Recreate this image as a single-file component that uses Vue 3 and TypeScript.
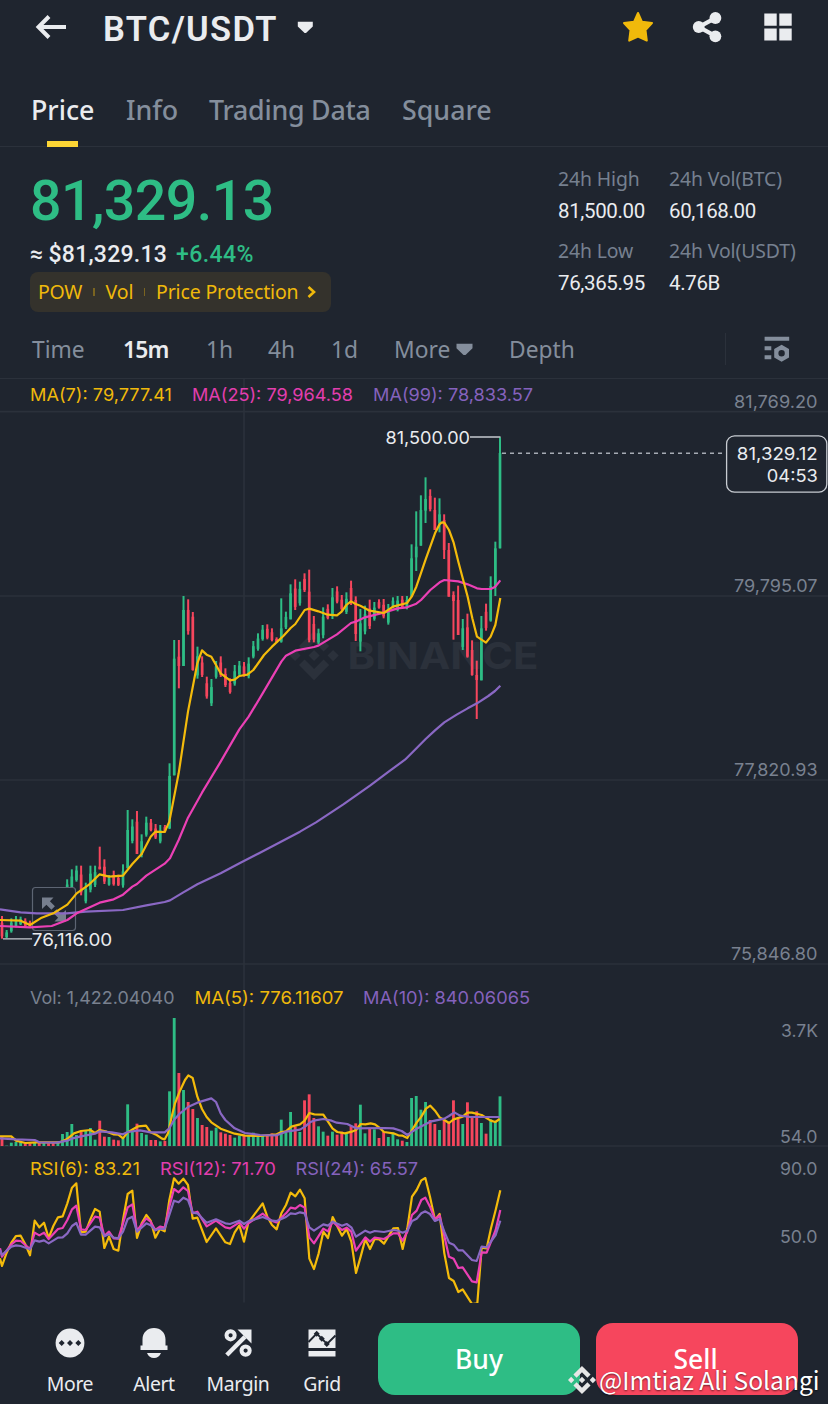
<script setup lang="ts">
interface Candle {
  x: number
  up: boolean
  high: number
  low: number
  volTop: number
  bodyTop: number
  bodyBottom: number
}

interface Label {
  text: string
  x: number
  y: number
  w: number
  tone: string
}

const tabs = ['Price', 'Info', 'Trading Data', 'Square']
const intervals = ['Time', '15m', '1h', '4h', '1d', 'More', 'Depth']

const stats = [
  ['24h High', '24h Vol(BTC)'],
  ['81,500.00', '60,168.00'],
  ['24h Low', '24h Vol(USDT)'],
  ['76,365.95', '4.76B'],
]

// direction, high, low, volume top and, for some, body top and bottom:
// all in thirds of a pixel within their panel
const raw = `r 1488 1556 470,g 1530 1554 497,g 1495 1538 488,g 1488 1522 486,g 1490 1515 486,r 1495 1520 490,r 1502 1520 490,
g 1495 1515 488,r 1490 1510 488,g 1480 1500 488,r 1480 1495 490,r 1475 1495 488,g 1450 1490 485,g 1420 1470 462,
g 1378 1430 456,g 1348 1420 432,g 1337 1385 465,r 1337 1426 455,g 1388 1450 453,g 1337 1417 444,g 1337 1401 479,
r 1280 1348 422 1340 1348,r 1318 1392 470,g 1365 1397 471,r 1352 1397 479,r 1364 1398 481,g 1333 1403 475,g 1170 1345 373 1230 1345,
g 1198 1270 452,r 1173 1302 431 1205 1302,g 1243 1312 459,g 1190 1250 464,r 1197 1234 480,r 1212 1257 480,g 1215 1270 484,
r 1215 1237 483,g 1030 1227 334 1068 1225,g 660 1066 114 716 1066,r 660 805 279 710 738,g 528 738 330 570 738,r 538 644 366,r 576 752 387 590 750,g 680 776 414,
r 709 771 435,r 770 836 441,g 777 858 452,g 723 776 443,r 709 771 457,r 745 801 461,r 775 821 465,g 735 797 473,
g 723 768 467,r 726 770 467,g 712 775 468,g 663 715 458,g 640 692 468,g 615 662 468,r 613 658 465,r 625 664 460,
r 652 668 466,g 535 668 419 625 665,g 575 627 457,g 493 598 396 520 598,r 478 570 440,g 485 557 456,r 460 516 361,r 449 667 343 515 660,
r 588 667 414,g 626 672 439,g 562 655 455,r 553 598 467,g 504 597 455,r 499 550 464,r 525 572 455,g 517 582 460,
r 482 555 438,r 529 663 430 540 642,g 567 694 374 610 665,g 557 643 460,r 539 627 445,g 546 602 448,r 538 566 474,r 537 595 456,
g 552 614 471,g 532 565 458,g 528 574 478,r 528 565 482,g 528 568 486,g 373 530 354 415 530,g 274 453 348 380 412,g 226 377 389 270 377,
g 172 309 366 237 272,r 208 274 420,r 233 330 432 270 330,g 235 337 450 283 310,r 283 417 420 300 390,r 369 530 425 390 530,r 514 659 361 525 543,r 497 645 417 540 645,
g 597 690 432,r 581 713 367 622 710,r 661 767 412 690 765,r 722 897 394 765 780,g 588 781 429 625 781,r 551 632 461,g 469 605 418 498 602,g 365 528 425 385 500,g 52 385 349 99 385`

const candles: Candle[] = raw.split(',\n').join(',').split(',').map((row, i) => {
  const [dir, high, low, vol, top, bottom] = row.trim().split(' ')
  const h = Number(high)
  const l = Number(low)
  return {
    x: 6 + i * 13.963,
    up: dir === 'g',
    high: h,
    low: l,
    volTop: Number(vol),
    bodyTop: top ? Number(top) : h + (l - h) * 0.3,
    bodyBottom: bottom ? Number(bottom) : h + (l - h) * 0.9,
  }
})

// Joins the first page of a series with the page that begins 260px further right
function series(first: string, second = ''): string {
  const shifted = second
    .split(' ')
    .filter(Boolean)
    .map((p) => {
      const [x, y] = p.split(',').map(Number)
      return `${x + 780},${y}`
    })
  return [first, ...shifted].join(' ')
}

const priceLines = [
  { tone: 'purple', points: '0,1468 62,1477 110,1480 200,1480 257,1475 369,1470 439,1456 494,1446 510,1441 550,1417 592,1393 662,1360 720,1329 780,1298 840,1267 900,1235 948,1207 1030,1153 1110,1097 1170,1052 1215,1019 1245,989 1277,957 1305,931 1333,907 1370,884 1403,865 1431,850 1465,828 1485,813 1501,797' },
  { tone: 'pink', points: '0,1518 90,1522 155,1518 202,1500 230,1480 299,1448 341,1438 369,1424 397,1400 411,1392 439,1367 494,1331 510,1315 536,1260 564,1193 606,1118 662,1025 718,928 746,890 788,820 844,725 858,707 886,692 942,681 955,677 1011,643 1053,609 1067,605 1095,592 1151,578 1193,565 1221,562 1249,551 1263,540 1291,510 1319,487 1333,480 1375,484 1403,493 1431,505 1445,507 1472,507 1486,500 1501,481' },
  { tone: 'yellow', points: '0,1500 62,1502 90,1515 125,1493 160,1480 202,1454 230,1420 268,1393 299,1363 327,1370 369,1367 397,1332 425,1302 452,1250 466,1235 494,1236 508,1205 536,1060 564,875 592,730 606,691 620,704 634,710 662,760 690,781 704,779 718,768 742,764 760,750 792,705 816,680 850,648 872,624 886,612 914,570 928,566 955,574 983,584 1011,586 1025,575 1039,555 1053,544 1067,552 1081,557 1109,572 1151,579 1179,560 1221,549 1235,530 1249,500 1277,418 1305,340 1319,312 1326,307 1333,308 1347,330 1361,368 1375,425 1403,530 1417,595 1431,650 1458,668 1472,650 1486,615 1501,534' },
]

const volumeLines = [
  { tone: 'yellow', points: series('0,469 34,469 48,482 76,489 110,487 180,487 200,478 222,460 243,453 271,450 285,459 299,450 320,455 340,463 355,464 369,475 383,457 400,447 415,439 438,437 452,457 470,465 486,476 494,478 504,460 515,410 525,370 540,332 555,300 565,286 578,294 592,350 606,387 620,411 634,427 662,446 704,461 735,467 780,468', '50,463 64,456 78,454 94,440 120,433 134,422 148,399 163,403 190,404 204,425 218,446 232,456 255,460 275,455 288,450 302,432 316,433 332,430 345,433 358,443 372,456 400,460 415,466 428,467 442,474 456,450 470,428 484,410 498,386 511,377 525,392 539,412 553,420 567,429 581,418 608,410 622,398 636,398 665,405 692,422 706,426 719,417') },
  { tone: 'purple', points: series('0,475 48,478 104,480 118,487 170,488 202,482 215,476 243,469 285,461 300,454 335,457 369,463 383,456 420,451 452,457 494,457 508,445 522,420 540,400 564,381 592,368 634,355 648,366 662,400 676,420 704,445 735,459 780,465', '50,466 78,455 120,449 135,440 150,427 165,421 190,417 215,422 230,428 262,432 288,445 375,444 400,445 425,453 442,465 470,446 511,425 553,416 567,408 583,397 600,407 630,411 719,411') },
]

const rsiLines = [
  { tone: 'yellow', points: series('0,325 6,348 20,308 34,278 48,258 62,257 76,283 90,316 104,212 118,232 132,218 146,264 160,228 174,202 188,199 202,160 216,113 229,100 243,247 257,245 271,208 285,177 299,185 313,294 327,260 341,297 355,302 369,210 383,132 397,122 411,264 425,220 439,195 452,212 466,263 480,237 494,244 508,150 522,85 536,101 550,86 564,105 578,206 592,203 620,276 648,235 676,277 690,282 704,247 718,226 732,275 745,218', '8,160 22,200 36,225 50,238 64,190 78,165 92,128 106,139 120,119 134,145 148,326 162,357 176,310 190,245 204,264 218,201 246,257 260,237 274,275 288,369 302,320 316,268 330,297 344,267 358,268 372,281 400,235 414,234 428,297 442,235 456,140 470,120 484,91 496,84 510,140 525,210 539,192 553,310 567,384 581,393 595,426 608,418 636,462 652,460 665,293 680,295 693,235 707,180 721,121') },
  { tone: 'pink', points: series('0,295 6,320 34,283 48,272 62,273 90,297 104,248 118,256 132,248 146,267 174,237 188,234 202,210 216,178 229,167 243,238 257,240 285,200 299,203 313,258 327,245 341,265 355,266 369,220 383,172 397,163 411,242 439,205 452,215 466,240 480,230 494,233 508,170 522,117 536,127 550,112 564,123 578,190 592,185 620,229 648,212 676,232 690,235 718,217 732,236 745,220', '8,191 36,213 50,217 78,190 92,173 106,176 120,165 134,173 148,262 162,280 190,236 204,244 218,215 246,240 260,233 274,245 288,302 316,262 330,275 344,263 372,267 400,250 414,250 428,272 442,245 456,195 470,182 484,150 496,143 510,170 525,208 539,196 553,258 567,320 581,326 595,354 608,352 636,394 650,397 658,350 665,307 680,308 707,240 721,180') },
  { tone: 'purple', points: series('0,300 6,315 34,290 48,286 62,288 90,298 104,271 118,275 132,271 146,280 174,263 188,262 202,250 216,228 229,219 243,254 257,254 285,230 299,232 313,259 327,252 341,263 355,265 369,245 383,207 397,200 411,245 439,220 452,226 466,241 480,236 494,237 508,195 522,152 536,157 550,143 564,150 578,188 592,190 620,218 648,208 676,220 690,222 718,212 732,222 745,214', '8,201 36,212 50,213 78,201 92,190 106,192 120,187 134,190 148,232 162,242 190,223 204,227 218,215 246,227 260,222 274,232 288,260 316,242 330,248 344,243 372,246 400,240 414,242 428,248 442,242 456,213 470,206 484,190 496,184 510,192 525,213 539,207 553,245 567,278 581,284 595,301 608,301 636,330 650,333 665,290 680,292 707,255 721,212') },
]

const labels: Label[] = [
  { text: 'MA(7): 79,777.41', x: 30, y: 401.2, w: 142, tone: 'yellow' },
  { text: 'MA(25): 79,964.58', x: 192, y: 401.2, w: 161, tone: 'pink' },
  { text: 'MA(99): 78,833.57', x: 373, y: 401.2, w: 160, tone: 'purple' },
  { text: '81,769.20', x: 734, y: 408.4, w: 83.5, tone: 'gray' },
  { text: '79,795.07', x: 734, y: 592.2, w: 83.5, tone: 'gray' },
  { text: '77,820.93', x: 734, y: 776.2, w: 83.5, tone: 'gray' },
  { text: '75,846.80', x: 731, y: 960.2, w: 86.5, tone: 'gray' },
  { text: 'Vol: 1,422.04040', x: 30, y: 1004.4, w: 144.5, tone: 'gray' },
  { text: 'MA(5): 776.11607', x: 194.5, y: 1004.4, w: 149, tone: 'yellow' },
  { text: 'MA(10): 840.06065', x: 363, y: 1004.4, w: 167, tone: 'purple' },
  { text: '3.7K', x: 781, y: 1036.5, w: 37, tone: 'gray' },
  { text: '54.0', x: 780, y: 1142.5, w: 37.5, tone: 'gray' },
  { text: 'RSI(6): 83.21', x: 30, y: 1174.5, w: 110, tone: 'yellow' },
  { text: 'RSI(12): 71.70', x: 160, y: 1174.5, w: 116, tone: 'pink' },
  { text: 'RSI(24): 65.57', x: 295.5, y: 1174.5, w: 122.5, tone: 'purple' },
  { text: '90.0', x: 780, y: 1175, w: 37.5, tone: 'gray' },
  { text: '50.0', x: 780, y: 1243.2, w: 37.5, tone: 'gray' },
]

const binance =
  'M16.624 13.9202l2.7175 2.7154-7.353 7.353-7.353-7.352 2.7175-2.7164 4.6355 4.6595 4.6356-4.6595zm4.6366-4.6366L24 12l-2.7154 2.7164L18.5682 12l2.6924-2.7164zm-9.272.001l2.7163 2.6914-2.7164 2.7174v-.001L9.2721 12l2.7164-2.7154zm-9.2722-.001L5.4088 12l-2.6914 2.6924L0 12l2.7164-2.7164zM11.9885.0115l7.353 7.329-2.7174 2.7154-4.6356-4.6356-4.6355 4.6595-2.7174-2.7154 7.353-7.353z'
</script>

<template>
  <main class="screen">
    <header class="topbar">
      <svg class="back" width="32" height="26" viewBox="0 0 32 26">
        <path d="M14 2.500 3.500 13 14 23.500M4 13h27" fill="none" stroke="#eaecef" stroke-width="4" />
      </svg>
      <h1>BTC/USDT</h1>
      <svg class="caret" width="17" height="13" viewBox="0 0 17 13">
        <path d="M.8.700h15v4.800L9 12H7.600L.8 5.500z" fill="#eaecef" />
      </svg>
      <span class="spacer"></span>
      <svg class="star" width="32" height="32" viewBox="0 0 32 32">
        <path d="M16 2 20 10.800 30 12 23.500 19 24.800 29.600 16 25.500 7.200 29.600 8.500 19 2 12 12 10.800z" fill="#f0b90b" stroke="#f0b90b" stroke-width="2" stroke-linejoin="round" />
      </svg>
      <svg class="share" width="30" height="32" viewBox="0 0 30 32">
        <path d="M24 6.700 7 16l17 9.300" fill="none" stroke="#eaecef" stroke-width="4.200" />
        <circle cx="23.400" cy="7" r="5.900" fill="#eaecef" />
        <circle cx="6.700" cy="16" r="5.900" fill="#eaecef" />
        <circle cx="23.400" cy="25.300" r="5.900" fill="#eaecef" />
      </svg>
      <svg class="tiles" width="28" height="28" viewBox="0 0 28 28">
        <path d="M.3.600h12.400v12.200H.3zM15.300.600h12.400v12.200H15.300zM.3 15.600h12.400v12H.3zM15.300 15.600h12.400v12H15.300z" fill="#eaecef" />
      </svg>
    </header>

    <nav class="tabs">
      <span v-for="(tab, i) in tabs" :key="tab" :class="['tab', `tab-${i}`, { active: i === 0 }]">{{ tab }}</span>
    </nav>

    <section class="summary">
      <div class="quote">
        <div class="last">81,329.13</div>
        <div class="fiat"><span class="approx">≈</span> <span class="usd">$81,329.13</span> <span class="change">+6.44%</span></div>
        <div class="tags">
          <span class="tag-pow">POW</span><i></i><span class="tag-vol">Vol</span><i></i><span class="tag-pp">Price Protection</span>
          <svg width="10" height="14" viewBox="0 0 10 14"><path d="M1.500 2 7 7l-5.500 5" fill="none" stroke="#f0b90b" stroke-width="2.600" /></svg>
        </div>
      </div>
      <div class="stats">
        <template v-for="(row, r) in stats" :key="r">
          <span v-for="cell in row" :key="cell" :class="r % 2 ? 'value' : 'name'">{{ cell }}</span>
        </template>
      </div>
    </section>

    <nav class="intervals">
      <span v-for="item in intervals" :key="item" :class="{ active: item === '15m', more: item === 'More' }">{{ item }}<svg v-if="item === 'More'" width="17" height="13" viewBox="0 0 17 13"><path d="M.5.700h16v4.600L9.500 12h-2L.5 5.300z" fill="#848e9c" /></svg></span>
      <div class="settings">
        <svg width="26" height="26" viewBox="0 0 26 26">
          <path d="M.6.800h24.600v4H.6zM.6 10.300h6.700v4H.6zM.6 19.300h6.700v4H.6z" fill="#848e9c" />
          <path fill-rule="evenodd" d="M17.600 8.800 25 13v8.500l-7.400 4.300-7.400-4.300V13zM17.600 14a3.200 3.200 0 1 0 0 6.400 3.200 3.200 0 0 0 0-6.400z" fill="#848e9c" />
        </svg>
      </div>
    </nav>

    <svg class="chart" width="828" height="925" viewBox="0 379 828 925">
      <defs>
        <clipPath id="rsi-area"><rect x="0" y="80" width="2484" height="379" /></clipPath>
      </defs>
      <path class="grid" d="M0 411.700H828M0 596H828M0 780H828M0 964H828M0 1146H828M244 379V1302.500" />

      <g class="brand">
        <path :d="binance" transform="translate(289.500 631) scale(2.050)" />
        <text x="347.500" y="668.500" textLength="191" lengthAdjust="spacingAndGlyphs">BINANCE</text>
      </g>

      <g transform="translate(0 420) scale(.33333)">
        <g v-for="(c, i) in candles" :key="i" :class="c.up ? 'up' : 'down'">
          <rect :x="c.x - 3" :y="c.high" width="6" :height="c.low - c.high" />
          <rect :x="c.x - 4" :y="c.bodyTop" width="8" :height="c.bodyBottom - c.bodyTop" />
        </g>
      </g>

      <rect x="32.500" y="887.500" width="43" height="43" rx="3" class="expand" />
      <path d="M42 897.500h11.500l-3.600 3.700 5 5-3.500 3.500-5-5-4.400 4.400zM66 921.500H54.500l3.600-3.700-5-5 3.500-3.500 5 5 4.400-4.400z" fill="#777f8e" />

      <g transform="translate(0 420) scale(.33333)">
        <polyline v-for="l in priceLines" :key="l.tone" :class="['line', l.tone]" :points="l.points" />
      </g>

      <g transform="translate(0 980) scale(.33333)">
        <rect v-for="(c, i) in candles" :key="i" :class="c.up ? 'up' : 'down'" :x="c.x - 4.300" :y="c.volTop" width="8.600" :height="498 - c.volTop" />
        <polyline v-for="l in volumeLines" :key="l.tone" :class="['line', l.tone]" :points="l.points" />
      </g>

      <g transform="translate(0 1150) scale(.33333)" clip-path="url(#rsi-area)">
        <polyline v-for="l in rsiLines" :key="l.tone" :class="['line', l.tone]" :points="l.points" />
      </g>

      <text v-for="l in labels" :key="l.text" :x="l.x" :y="l.y" :textLength="l.w" lengthAdjust="spacingAndGlyphs" :class="['label', `fill-${l.tone}`]">{{ l.text }}</text>

      <path d="M470 437h30.500M3 938.800h29" stroke="#c5c9d0" stroke-width="1.300" />
      <path d="M502 453.200H722" stroke="#a6abb4" stroke-width="1.500" stroke-dasharray="4 4" />
      <text x="385.500" y="444.400" textLength="84.500" lengthAdjust="spacingAndGlyphs" class="label fill-white">81,500.00</text>
      <text x="31.800" y="945.800" textLength="80.500" lengthAdjust="spacingAndGlyphs" class="label fill-white">76,116.00</text>
      <rect x="726.600" y="435.800" width="100.200" height="56.400" rx="8" fill="#1f252f" stroke="#c8ccd2" stroke-width="1.300" />
      <text x="736.800" y="460.400" textLength="81" lengthAdjust="spacingAndGlyphs" class="label fill-white">81,329.12</text>
      <text x="766.800" y="482.400" textLength="51" lengthAdjust="spacingAndGlyphs" class="label fill-white">04:53</text>
    </svg>

    <footer class="actions">
      <div class="shortcut">
        <svg width="32" height="32" viewBox="0 0 32 32">
          <circle cx="16" cy="16" r="14.400" fill="#eaecef" />
          <path d="M7.700 13 10.700 16l-3 3-3-3zM16 13l3 3-3 3-3-3zM24.300 13l3 3-3 3-3-3z" fill="#1f252f" />
        </svg>
        <span>More</span>
      </div>
      <div class="shortcut">
        <svg width="32" height="32" viewBox="0 0 32 32">
          <path d="M4.500 12.500C4.500 5.500 9.500 1 16 1s11.500 4.500 11.500 11.500V18.500h2V23h-27v-4.500h2zM9 26h14c-1.300 3.200-3.800 5-7 5s-5.700-1.800-7-5z" fill="#eaecef" />
        </svg>
        <span>Alert</span>
      </div>
      <div class="shortcut">
        <svg width="32" height="32" viewBox="0 0 32 32">
          <path d="M4.800 28 23 9.800" stroke="#eaecef" stroke-width="4.400" />
          <path d="M15.500 2.500h14v14z" fill="#eaecef" />
          <circle cx="8.600" cy="8.300" r="4.100" fill="none" stroke="#eaecef" stroke-width="4" />
          <circle cx="23.600" cy="23.600" r="4.100" fill="none" stroke="#eaecef" stroke-width="4" />
        </svg>
        <span>Margin</span>
      </div>
      <div class="shortcut">
        <svg width="32" height="32" viewBox="0 0 32 32">
          <path d="M2.500 2.500h27v18.500h-27zM2.500 24h27v5.500h-27z" fill="#eaecef" />
          <path d="M2.500 15 10.700 6.700 21 17l8.500-8.500" fill="none" stroke="#1f252f" stroke-width="1.900" />
          <path d="M10.700 3.700l3 3-3 3-3-3zM15.800 8.800l3 3-3 3-3-3zM20.800 14l3 3-3 3-3-3z" fill="#1f252f" />
        </svg>
        <span>Grid</span>
      </div>
      <button class="buy">Buy</button>
      <button class="sell">Sell</button>
      <div class="author">
        <svg width="28" height="28" viewBox="0 0 24 24"><path :d="binance" fill="#e6e6e6" /></svg>
        <span>@Imtiaz Ali Solangi</span>
      </div>
    </footer>
  </main>
</template>

<style>
body {
  background: #1f252f;
}
</style>

<style scoped>
.screen {
  position: relative;
  width: 828px;
  height: 1404px;
  overflow: hidden;
  background: #1f252f;
  color: #eaecef;
  font-family: "Noto Sans", sans-serif;
}
.topbar {
  display: flex;
  align-items: center;
  height: 55px;
  padding: 0 36px 0 35px;
  box-sizing: border-box;
}
h1 {
  margin: 0 0 0 36px;
  width: 194px;
  font: 600 34.5px/55px Roboto, sans-serif;
  letter-spacing: 1.3px;
  padding-top: 3px;
  box-sizing: border-box;
  white-space: nowrap;
}
.back { margin-top: -2px; }
.caret { margin-top: -1px; }
.spacer { flex: 1; }
.star, .share, .tiles { margin-top: -1px; }
.share { margin-left: 38px; }
.tiles { margin-left: 42px; }
.tabs {
  display: grid;
  grid-template-columns: 95px 83px 193px 120px;
  height: 92px;
  padding: 35px 0 0 31px;
  box-sizing: border-box;
  border-bottom: 1px solid #2b313b;
  font-weight: 500;
  font-size: 26.8px;
  line-height: 40px;
  color: #848e9c;
  white-space: nowrap;
}
.tab-2 { letter-spacing: -0.25px; }
.active { color: #eaecef; }
.tabs .active {
  position: relative;
}
.tabs .active::after {
  content: "";
  position: absolute;
  left: 16px;
  top: 51px;
  width: 31px;
  height: 5.5px;
  background: #fcd535;
}
.summary {
  display: flex;
  justify-content: space-between;
  height: 176px;
}
.quote { padding: 24px 0 0 30px; }
.last {
  height: 64px;
  font: 500 55.5px/62px Roboto, sans-serif;
  letter-spacing: -0.55px;
  color: #2ebd85;
}
.fiat {
  display: flex;
  height: 37px;
  font: 500 23px/40px Roboto, sans-serif;
}
.approx { width: 18.5px; }
.usd { width: 127.5px; letter-spacing: 0.25px; }
.change { color: #2ebd85; letter-spacing: 0.4px; }
.tags {
  display: flex;
  align-items: center;
  width: 301px;
  height: 40px;
  padding-left: 8px;
  box-sizing: border-box;
  border-radius: 8px;
  background: #34322c;
  color: #f0b90b;
  font-size: 19.5px;
  line-height: 40px;
  white-space: nowrap;
}
.tags i { width: 1.5px; height: 8px; background: #7a6420; }
.tag-pow { width: 55px; letter-spacing: -0.3px; }
.tag-vol { width: 38px; margin-left: 11px; }
.tag-pp { width: 143px; margin-left: 11px; letter-spacing: -0.15px; }
.tags svg { margin-left: 8px; }
.stats {
  display: grid;
  grid-template-columns: 111px 159px;
  grid-template-rows: 33px 39px 33px 32px;
  padding-top: 16px;
  line-height: 32px;
  white-space: nowrap;
}
.name { font-size: 19.4px; color: #76808f; letter-spacing: -0.1px; }
.value { font: 400 20.5px/31px Roboto, sans-serif; letter-spacing: -0.35px; }
.intervals {
  display: grid;
  grid-template-columns: 92px 83px 62px 63px 62px 115px 216px 1fr;
  height: 56px;
  padding-left: 32px;
  box-sizing: border-box;
  border-bottom: 1px solid #2b313b;
  font-size: 22.8px;
  line-height: 54px;
  color: #848e9c;
  white-space: nowrap;
}
.intervals span:nth-child(3),
.intervals span:nth-child(4),
.intervals span:nth-child(5) { margin-left: -1px; }
.intervals .active { font-weight: 600; letter-spacing: -0.8px; margin-left: -1px; }
.more svg { margin: 0 0 2px 6px; }
.settings {
  height: 32px;
  margin-top: 10px;
  padding-left: 38px;
  border-left: 1px solid #2b313b;
}
.settings svg { display: block; margin-top: 3px; }
.chart { display: block; }
.grid { fill: none; stroke: #2b313b; stroke-width: 1.7; }
.brand { fill: #2b313b; font: 700 37px Inter, sans-serif; }
.up { fill: #2ebd85; }
.down { fill: #f6465d; }
.line { fill: none; stroke-width: 6.6; stroke-linejoin: round; }
.yellow { stroke: #f4bb0b; }
.pink { stroke: #eb40b5; }
.purple { stroke: #8a68c4; }
.expand { fill: #1f252f; stroke: #5d6573; stroke-width: 1.2; }
.label { font: 400 17.7px Inter, sans-serif; }
.fill-yellow { fill: #f0b90b; }
.fill-pink { fill: #e23eae; }
.fill-purple { fill: #8562bd; }
.fill-gray { fill: #79818f; }
.fill-white { fill: #eaecef; }
.actions {
  display: flex;
  position: relative;
  height: 100px;
  padding: 19px 0 0 28px;
  box-sizing: border-box;
}
.shortcut {
  display: flex;
  flex-direction: column;
  align-items: center;
  width: 84px;
  font-size: 19.4px;
  letter-spacing: -0.4px;
  line-height: 30px;
}
.shortcut svg { margin-top: 4px; }
.shortcut span { margin-top: 10px; }
button {
  width: 202px;
  height: 72px;
  padding: 1px 0 0;
  border: 0;
  border-radius: 17px;
  color: #fff;
  font: 500 26.5px/71px "Noto Sans", sans-serif;
}
.buy { margin-left: 14px; background: #2ebd85; }
.sell { margin-left: 16px; padding-right: 3px; background: #f6465d; }
.author {
  position: absolute;
  left: 568px;
  top: 62px;
  display: flex;
  align-items: center;
  gap: 3px;
  height: 28px;
  color: #fff;
  font: 400 24.6px/26px "Noto Sans CJK SC", sans-serif;
  text-shadow: 0 1px 2px rgba(0, 0, 0, 0.6);
  white-space: nowrap;
}
.author span { margin-top: -2px; }
</style>
